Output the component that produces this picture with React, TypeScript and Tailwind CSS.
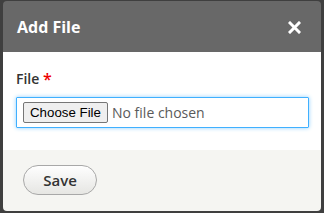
import React from 'react';

const App: React.FC = () => {
  return (
    <div className="w-[324px] h-[213px] bg-[#3f3f3f] pt-[1px] px-[3px]">
      <div className="w-[318px] h-[210px] rounded-[4px] overflow-hidden flex flex-col">
        <div className="h-[51px] bg-[#686868] flex items-center justify-between pl-[14px] pr-[20px]">
          <h2 className="text-[16px] font-bold text-white font-['Open_Sans',sans-serif]">Add File</h2>
          <svg width="13" height="13" viewBox="0 0 13 13" className="mt-[1px]">
            <path d="M2 2 L11 11 M11 2 L2 11" stroke="#fff" strokeWidth="3" strokeLinecap="square" />
          </svg>
        </div>
        <div className="bg-white h-[98px] px-[13px] pt-[17px]">
          <label className="block text-[14px] font-semibold text-[#333] font-['Open_Sans',sans-serif] leading-[20px]">
            File <span className="text-[#e00] text-[16px] align-top">*</span>
          </label>
          <div className="mt-[8px] h-[31px] w-[293px] border border-[#40b0ff] shadow-[0_0_4px_#8fd0ff] rounded-[1px] flex items-center pl-[6px]">
            <button
              type="button"
              className="h-[21px] w-[85px] bg-[#efefef] border border-[#767676] rounded-[2px] text-[13.3px] text-black font-['Liberation_Sans',Arial,sans-serif] leading-none"
            >
              Choose File
            </button>
            <span className="ml-[4px] text-[14px] text-[#5a5a5a] font-['Open_Sans',sans-serif]">No file chosen</span>
          </div>
        </div>
        <div className="flex-1 bg-[#f5f5f2] pl-[20px] pt-[15px]">
          <button
            type="button"
            className="h-[30px] w-[74px] rounded-full border border-[#a8a8a8] bg-gradient-to-b from-[#fefefe] to-[#e6e6e3] text-[15px] font-semibold text-[#333] font-['Open_Sans',sans-serif]"
          >
            Save
          </button>
        </div>
      </div>
    </div>
  );
};

export default App;
